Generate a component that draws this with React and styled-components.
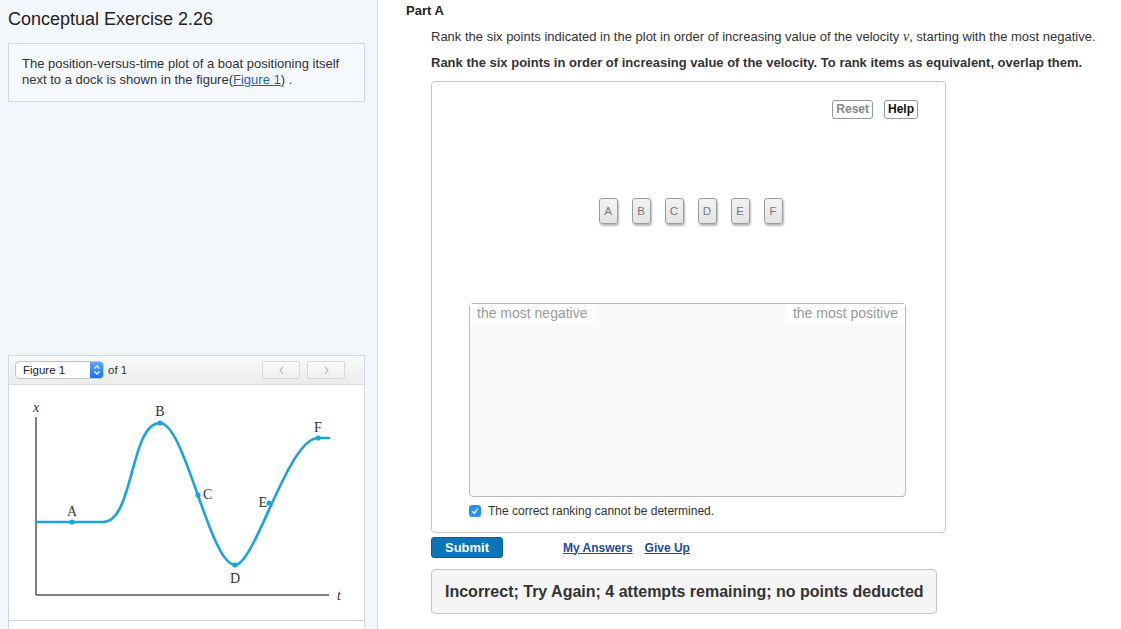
import React from 'react';
import styled, { createGlobalStyle } from 'styled-components';

const GlobalStyle = createGlobalStyle`
  body {
    margin: 0;
    font-family: "Liberation Sans", Arial, Helvetica, sans-serif;
    color: #222;
    background: #fff;
  }
`;

const CURVE = '#1ba3dd';

function Plot() {
  const points = [
    [72, 522],
    [160, 423],
    [198, 495],
    [235, 565],
    [269, 503],
    [318, 438],
  ];
  return (
    <svg width="356" height="235" viewBox="9 385 356 235">
      <line x1="36" y1="417" x2="36" y2="595" stroke="#555" strokeWidth="1.5" />
      <line x1="36" y1="595" x2="329" y2="595" stroke="#555" strokeWidth="1.5" />
      <path
        d="M36 522 L103 522 C134 522 130 423 160 423 C185 423 210 565 235 565 C255 565 288 438 318 438 L330 438"
        fill="none"
        stroke={CURVE}
        strokeWidth="2.6"
      />
      {points.map(([x, y]) => (
        <circle key={x} cx={x} cy={y} r="2.6" fill={CURVE} />
      ))}
      <PlotLabel x="36" y="412" textAnchor="middle" $italic>x</PlotLabel>
      <PlotLabel x="339" y="600" textAnchor="middle" $italic>t</PlotLabel>
      <PlotLabel x="72" y="516" textAnchor="middle">A</PlotLabel>
      <PlotLabel x="160" y="416" textAnchor="middle">B</PlotLabel>
      <PlotLabel x="203" y="499">C</PlotLabel>
      <PlotLabel x="267" y="507" textAnchor="end">E</PlotLabel>
      <PlotLabel x="235" y="583" textAnchor="middle">D</PlotLabel>
      <PlotLabel x="318" y="432" textAnchor="middle">F</PlotLabel>
    </svg>
  );
}

function Stepper() {
  return (
    <svg width="8" height="12" viewBox="0 0 8 12">
      <path d="M1.5 4.5 L4 2 L6.5 4.5 M1.5 7.5 L4 10 L6.5 7.5" fill="none" stroke="#fff" strokeWidth="1.3" />
    </svg>
  );
}

function Chevron({ dir }) {
  const d = dir === 'left' ? 'M5 1 L2 4.5 L5 8' : 'M2 1 L5 4.5 L2 8';
  return (
    <svg width="7" height="9" viewBox="0 0 7 9">
      <path d={d} fill="none" stroke="#bbb" strokeWidth="1.2" />
    </svg>
  );
}

function Check() {
  return (
    <svg width="8" height="8" viewBox="0 0 8 8">
      <path d="M1.2 4.2 L3.2 6.2 L6.8 1.6" fill="none" stroke="#fff" strokeWidth="1.5" />
    </svg>
  );
}

export default function App() {
  return (
    <>
      <GlobalStyle />
      <Page>
        <Sidebar>
          <Title>Conceptual Exercise 2.26</Title>
          <IntroBox>
            The position-versus-time plot of a boat positioning itself
            <br />
            next to a dock is shown in the figure(<IntroLink>Figure 1</IntroLink>) .
          </IntroBox>
          <FigurePanel>
            <FigureHeader>
              <SelectBox>
                <SelectText>Figure 1</SelectText>
                <SelectArrows>
                  <Stepper />
                </SelectArrows>
              </SelectBox>
              <OfText>of 1</OfText>
              <NavButtons>
                <NavButton>
                  <Chevron dir="left" />
                </NavButton>
                <NavButton>
                  <Chevron dir="right" />
                </NavButton>
              </NavButtons>
            </FigureHeader>
            <PlotArea>
              <Plot />
            </PlotArea>
            <FigureFooter />
          </FigurePanel>
        </Sidebar>

        <Main>
          <PartTitle>Part A</PartTitle>
          <Content>
            <Prompt>
              Rank the six points indicated in the plot in order of increasing value of the velocity{' '}
              <MathVar>v</MathVar>, starting with the most negative.
            </Prompt>
            <Instruction>
              Rank the six points in order of increasing value of the velocity. To rank items as
              equivalent, overlap them.
            </Instruction>
            <RankingBox>
              <ToolRow>
                <ToolButton $muted>Reset</ToolButton>
                <ToolButton>Help</ToolButton>
              </ToolRow>
              <TileRow>
                {['A', 'B', 'C', 'D', 'E', 'F'].map((t) => (
                  <Tile key={t}>{t}</Tile>
                ))}
              </TileRow>
              <Target>
                <TargetLabel>the most negative</TargetLabel>
                <TargetLabel>the most positive</TargetLabel>
              </Target>
              <CheckRow>
                <CheckBox>
                  <Check />
                </CheckBox>
                The correct ranking cannot be determined.
              </CheckRow>
            </RankingBox>
            <ActionRow>
              <SubmitButton>Submit</SubmitButton>
              <ActionLink>My Answers</ActionLink>
              <ActionLink>Give Up</ActionLink>
            </ActionRow>
            <Feedback>Incorrect; Try Again; 4 attempts remaining; no points deducted</Feedback>
          </Content>
        </Main>
      </Page>
    </>
  );
}

const Page = styled.div`
  display: flex;
  min-height: 100vh;
  overflow: hidden;
`;

const Sidebar = styled.div`
  width: 378px;
  flex-shrink: 0;
  box-sizing: border-box;
  padding: 9px 12px 0 8px;
  background: #f2f7fc;
  border-right: 1px solid #c7dbec;
  height: 629px;
  overflow: hidden;
`;

const Title = styled.div`
  font-size: 18px;
  line-height: 20px;
  color: #222;
`;

const IntroBox = styled.div`
  margin-top: 14px;
  padding: 12px 13px 13px;
  border: 1px solid #c9dbeb;
  background: #f5f9fd;
  font-size: 13px;
  line-height: 16px;
  color: #333;
`;

const IntroLink = styled.span`
  color: #1565c0;
  text-decoration: underline;
`;

const FigurePanel = styled.div`
  margin-top: 253px;
  border: 1px solid #c9dbeb;
  background: #fff;
`;

const FigureHeader = styled.div`
  display: flex;
  align-items: center;
  height: 28px;
  padding: 0 19px 0 6px;
  background: linear-gradient(#fafafa, #ececec);
  border-bottom: 1px solid #dcdcdc;
`;

const SelectBox = styled.div`
  display: flex;
  width: 89px;
  height: 18px;
  box-sizing: border-box;
  border: 1px solid #c4c4c4;
  border-radius: 4px;
  background: #fff;
  overflow: hidden;
`;

const SelectText = styled.div`
  flex: 1;
  padding-left: 7px;
  font-size: 11.5px;
  line-height: 16px;
  color: #222;
`;

const SelectArrows = styled.div`
  display: flex;
  align-items: center;
  justify-content: center;
  width: 13px;
  background: linear-gradient(#5aa6f8, #1a73e8);
`;

const OfText = styled.div`
  margin-left: 4px;
  font-size: 11.5px;
  color: #333;
`;

const NavButtons = styled.div`
  display: flex;
  gap: 7px;
  margin-left: auto;
`;

const NavButton = styled.div`
  display: flex;
  align-items: center;
  justify-content: center;
  width: 38px;
  height: 18px;
  box-sizing: border-box;
  border: 1px solid #d8d8d8;
  border-radius: 2px;
  background: linear-gradient(#fbfbfb, #f0f0f0);
`;

const PlotArea = styled.div`
  height: 235px;
  svg {
    display: block;
  }
`;

const FigureFooter = styled.div`
  height: 20px;
  border-top: 1px solid #c9dbeb;
  background: #fff;
`;

const PlotLabel = styled.text`
  font-family: "Liberation Serif", "Times New Roman", serif;
  font-size: 14px;
  font-style: ${(p) => (p.$italic ? 'italic' : 'normal')};
  fill: #333;
`;

const Main = styled.div`
  flex: 1;
  padding: 3px 0 0 28px;
`;

const PartTitle = styled.div`
  font-size: 13px;
  font-weight: bold;
  line-height: 16px;
  color: #222;
`;

const Content = styled.div`
  margin-left: 25px;
`;

const Prompt = styled.div`
  margin-top: 10px;
  font-size: 13px;
  line-height: 16px;
  color: #333;
  white-space: nowrap;
`;

const MathVar = styled.span`
  font-family: "Liberation Serif", "Times New Roman", serif;
  font-style: italic;
  font-size: 14px;
`;

const Instruction = styled.div`
  margin-top: 10px;
  font-size: 13px;
  font-weight: bold;
  line-height: 16px;
  color: #333;
  white-space: nowrap;
`;

const RankingBox = styled.div`
  margin-top: 10px;
  width: 515px;
  height: 452px;
  box-sizing: border-box;
  border: 1px solid #c8c8c8;
  border-radius: 4px;
  display: flex;
  flex-direction: column;
  padding: 18px 27px 0 37px;
`;

const ToolRow = styled.div`
  display: flex;
  justify-content: flex-end;
  gap: 11px;
`;

const ToolButton = styled.div`
  height: 19px;
  box-sizing: border-box;
  padding: 0 3px;
  border: 1px solid #8a9aa6;
  border-radius: 3px;
  background: #fff;
  font-size: 12px;
  line-height: 17px;
  font-weight: bold;
  color: ${(p) => (p.$muted ? '#888' : '#111')};
`;

const TileRow = styled.div`
  display: flex;
  justify-content: center;
  gap: 14px;
  margin-top: 79px;
  padding-right: 6px;
`;

const Tile = styled.div`
  width: 19px;
  height: 26px;
  box-sizing: border-box;
  border: 1px solid #9c9c9c;
  border-radius: 3px;
  background: linear-gradient(#f2f2f2, #e4e4e4);
  box-shadow: 1px 2px 2px rgba(0, 0, 0, 0.28);
  display: flex;
  align-items: center;
  justify-content: center;
  font-size: 11.5px;
  color: #777;
`;

const Target = styled.div`
  margin-top: 79px;
  width: 437px;
  height: 194px;
  box-sizing: border-box;
  border: 1px solid #bbb;
  border-radius: 4px;
  background: #fafafa;
  display: flex;
  justify-content: space-between;
  align-items: flex-start;
`;

const TargetLabel = styled.div`
  padding: 1px 7px 2px;
  background: #fff;
  font-size: 14px;
  line-height: 17px;
  color: #999;
`;

const CheckRow = styled.div`
  display: flex;
  align-items: center;
  gap: 7px;
  margin-top: 7px;
  font-size: 12px;
  line-height: 14px;
  color: #333;
`;

const CheckBox = styled.div`
  width: 12px;
  height: 12px;
  border-radius: 3px;
  background: #2a8ff7;
  display: flex;
  align-items: center;
  justify-content: center;
`;

const ActionRow = styled.div`
  display: flex;
  align-items: center;
  margin-top: 4px;
  height: 21px;
`;

const SubmitButton = styled.div`
  width: 72px;
  height: 21px;
  box-sizing: border-box;
  border-radius: 3px;
  background: #0d74b8;
  border: 1px solid #0a5f98;
  color: #fff;
  font-size: 13px;
  font-weight: bold;
  line-height: 19px;
  text-align: center;
  margin-right: 60px;
`;

const ActionLink = styled.span`
  margin-right: 12px;
  font-size: 12px;
  font-weight: bold;
  color: #1d4a9a;
  text-decoration: underline;
`;

const Feedback = styled.div`
  margin-top: 11px;
  width: 506px;
  height: 45px;
  box-sizing: border-box;
  border: 1px solid #c8c8c8;
  border-radius: 4px;
  background: #f5f5f5;
  display: flex;
  align-items: center;
  padding-left: 13px;
  font-size: 16px;
  font-weight: bold;
  color: #333;
`;
